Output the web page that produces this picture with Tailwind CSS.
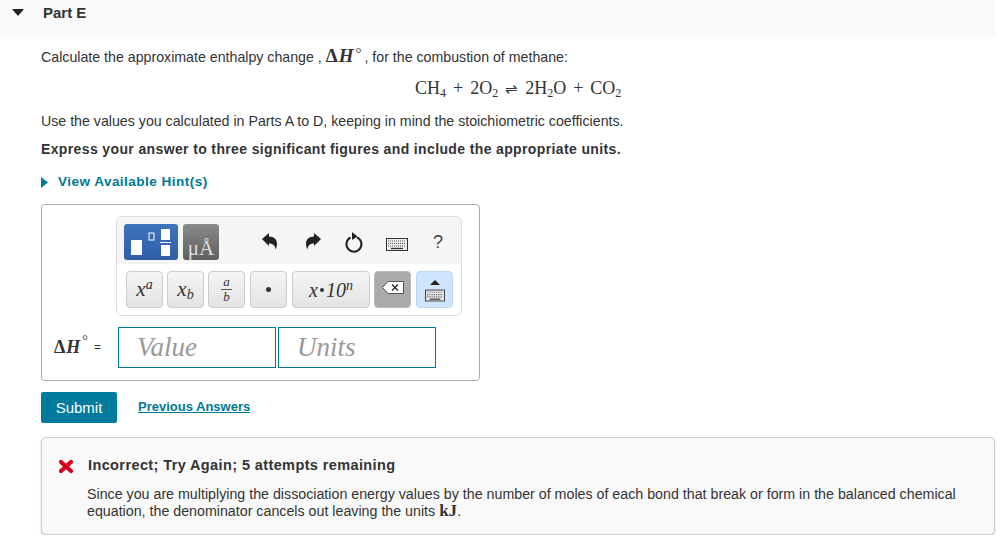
<!DOCTYPE html>
<html lang="en">
<head>
    <meta charset="UTF-8">
    <title>Part E</title>
    <script src="https://cdn.jsdelivr.net/npm/@tailwindcss/browser@4"></script>
</head>
<body class="bg-white font-['Liberation_Sans',Arial,sans-serif] text-[14.2px] text-[#333] overflow-hidden">
<div class="w-[995px]">
    <!-- Part header -->
    <div class="h-[37px] bg-[#f9f9f9] flex items-start pt-[4px]">
        <svg class="ml-[12px] mt-[5px]" width="12" height="7" viewBox="0 0 12 7"><path d="M0 0h12L6 7z" fill="#222"/></svg>
        <div class="ml-[19px] text-[15px] leading-[17px] font-bold text-[#333]">Part E</div>
    </div>

    <div class="pl-[41px]">
        <div class="h-[40px] pt-[9px] leading-[20px] flex items-baseline">
            <span class="whitespace-pre">Calculate the approximate enthalpy change , </span>
            <span class="font-['Liberation_Serif',serif] text-[19px] font-bold whitespace-pre tracking-[1px]">Δ<i>H</i><span class="relative top-[-4px] ml-[1px] text-[15px] font-normal">°</span></span><span class="ml-[2px]">, for the combustion of methane:</span>
        </div>
        <div class="h-[22px] font-['Liberation_Serif',serif] text-[18px] leading-[22px] text-[#333] ml-[374px] flex items-baseline whitespace-pre">CH<sub class="text-[12px]">4</sub><span class="mx-[7px]">+</span>2O<sub class="text-[12px]">2</sub><span class="text-[15px] mx-[7px]">⇌</span>2H<sub class="text-[12px]">2</sub>O<span class="mx-[7px]">+</span>CO<sub class="text-[12px]">2</sub></div>
        <div class="mt-[12px] leading-[20px]">Use the values you calculated in Parts A to D, keeping in mind the stoichiometric coefficients.</div>
        <div class="mt-[8px] leading-[20px] font-bold text-[14px] tracking-[0.37px]">Express your answer to three significant figures and include the appropriate units.</div>
        <div class="mt-[13px] flex items-center h-[20px] text-[#007996] font-bold text-[13.5px] tracking-[0.48px]">
            <svg width="7" height="11" viewBox="0 0 7 11"><path d="M0 0l7 5.5L0 11z" fill="#007996"/></svg>
            <span class="ml-[10px]">View Available Hint(s)</span>
        </div>

        <!-- Answer box -->
        <div class="mt-[12px] w-[439px] h-[177px] border border-[#aaa] rounded-[4px] relative">
            <div class="ml-[74px] mt-[11px] w-[346px] h-[100px] border border-[#ddd] rounded-[6px]">
                <!-- top toolbar -->
                <div class="h-[47px] bg-[#f5f5f5] rounded-t-[6px] flex items-start pt-[7px] pl-[7px]">
                    <div class="w-[54px] h-[36px] rounded-[3px] bg-gradient-to-b from-[#3f74bd] to-[#2f5ea8] flex items-center justify-center">
                        <svg width="44" height="30" viewBox="0 0 44 30">
                            <rect x="2" y="13" width="11" height="15" fill="#fff"/>
                            <rect x="20" y="6" width="5" height="7" fill="none" stroke="#fff"/>
                            <rect x="32" y="2" width="9" height="11" fill="#fff"/>
                            <rect x="31" y="15" width="11" height="1" fill="#fff"/>
                            <rect x="32" y="18" width="9" height="11" fill="#fff"/>
                        </svg>
                    </div>
                    <div class="ml-[5px] w-[36px] h-[36px] rounded-[3px] bg-gradient-to-b from-[#8a8a8a] to-[#5f5f5f] text-[#ddd] font-['Liberation_Serif',serif] text-[21px] flex items-end justify-center leading-[24px]">μÅ</div>
                    <!-- undo -->
                    <svg class="ml-[43px] mt-[9px]" width="16" height="17" viewBox="0 0 16 17"><path d="M0 6L7 0v3.5c5 0 8 3 8 7 0 2.5-.7 4.5-1.5 6-.3-3.5-2-6-6.5-6V13z" fill="#222"/></svg>
                    <!-- redo -->
                    <svg class="ml-[27px] mt-[9px]" width="16" height="17" viewBox="0 0 16 17"><path d="M16 6L9 0v3.5c-5 0-8 3-8 7 0 2.5.7 4.5 1.5 6 .3-3.5 2-6 6.5-6V13z" fill="#222"/></svg>
                    <!-- reset -->
                    <svg class="ml-[23px] mt-[7px]" width="20" height="22" viewBox="0 0 20 22"><path d="M6.500 6.500a7.500 7.500 0 1 0 6.500-.2" fill="none" stroke="#222" stroke-width="2"/><path d="M8 1l5.500 4.500L8 9z" fill="#222"/></svg>
                    <!-- keyboard -->
                    <svg class="ml-[22px] mt-[14px]" width="22" height="13" viewBox="0 0 22 13"><rect x=".5" y=".5" width="21" height="12" fill="#eee" stroke="#333"/><path d="M2 3h18M2 5.500h18M2 8h18" stroke="#555" stroke-width="1.200" stroke-dasharray="1 1"/><path d="M5 10.500h12" stroke="#333" stroke-width="1.300"/></svg>
                    <div class="ml-[25px] mt-[7px] text-[18px] leading-[22px] text-[#444]">?</div>
                </div>
                <!-- template buttons -->
                <div class="flex items-start pt-[7px] pl-[9px] font-['Liberation_Serif',serif] italic text-[#333]">
                    <div class="w-[37px] h-[37px] rounded-[4px] border border-[#ccc] bg-gradient-to-b from-[#f5f5f5] to-[#e3e3e3] flex items-center justify-center text-[21px]"><span>x<sup class="text-[14px]">a</sup></span></div>
                    <div class="ml-[4px] w-[37px] h-[37px] rounded-[4px] border border-[#ccc] bg-gradient-to-b from-[#f5f5f5] to-[#e3e3e3] flex items-center justify-center text-[21px]"><span>x<sub class="text-[14px]">b</sub></span></div>
                    <div class="ml-[4px] w-[37px] h-[37px] rounded-[4px] border border-[#ccc] bg-gradient-to-b from-[#f5f5f5] to-[#e3e3e3] flex flex-col items-center justify-center text-[13px] leading-[12px]"><span>a</span><span class="w-[11px] h-px bg-[#555] my-[1px]"></span><span>b</span></div>
                    <div class="ml-[5px] w-[37px] h-[37px] rounded-[4px] border border-[#ccc] bg-gradient-to-b from-[#f5f5f5] to-[#e3e3e3] flex items-center justify-center"><span class="w-[5px] h-[5px] rounded-full bg-[#333]"></span></div>
                    <div class="ml-[5px] w-[78px] h-[37px] rounded-[4px] border border-[#ccc] bg-gradient-to-b from-[#f5f5f5] to-[#e3e3e3] flex items-center justify-center text-[20px]"><span class="flex items-center">x<span class="w-[4px] h-[4px] rounded-full bg-[#333] mx-[2px]"></span><span>10<sup class="text-[14px]">n</sup></span></span></div>
                    <div class="ml-[4px] w-[37px] h-[37px] rounded-[4px] border border-[#bbb] bg-[#aaa] flex items-start justify-center pt-[9px]">
                        <svg width="22" height="13" viewBox="0 0 22 13"><path d="M6 .5h15.500v12H6L.5 6.500z" fill="#fff" stroke="#333" stroke-width=".8"/><path d="M10 3.500l6 6M16 3.500l-6 6" stroke="#222" stroke-width="1.300"/></svg>
                    </div>
                    <div class="ml-[5px] w-[37px] h-[37px] rounded-[4px] border border-[#bcd8f5] bg-[#cfe4fd] flex flex-col items-center pt-[8px]">
                        <svg width="10" height="5" viewBox="0 0 10 5"><path d="M0 5L5 0l5 5z" fill="#222"/></svg>
                        <svg class="mt-[4px]" width="20" height="13" viewBox="0 0 22 13"><rect x=".5" y=".5" width="21" height="12" fill="#eee" stroke="#333"/><path d="M2 3h18M2 5.500h18M2 8h18" stroke="#555" stroke-width="1.200" stroke-dasharray="1 1"/><path d="M5 10.500h12" stroke="#333" stroke-width="1.300"/></svg>
                    </div>
                </div>
            </div>
            <!-- inputs -->
            <div class="flex items-center mt-[11px] ml-[12px]">
                <div class="w-[64px] font-['Liberation_Serif',serif] text-[18px] font-bold flex items-start tracking-[1px]"><span>Δ<i>H</i></span><span class="text-[14px] font-normal leading-[14px] ml-[1px]">°</span><span class="font-['Liberation_Sans',sans-serif] font-normal text-[12px] leading-[26px] ml-[5px]">=</span></div>
                <div class="w-[158px] h-[41px] border border-[#007996] pl-[18px] font-['Liberation_Serif',serif] italic text-[27px] leading-[39px] text-[#999]">Value</div>
                <div class="ml-[2px] w-[158px] h-[41px] border border-[#007996] pl-[18px] font-['Liberation_Serif',serif] italic text-[27px] leading-[39px] text-[#999]">Units</div>
            </div>
        </div>

        <!-- Submit row -->
        <div class="mt-[11px] flex items-start">
            <div class="w-[76px] h-[31px] rounded-[2px] bg-[#007b9e] text-white text-[15px] leading-[31px] text-center">Submit</div>
            <div class="ml-[21px] mt-[6px] text-[#007996] font-bold text-[13px] underline leading-[17px]">Previous Answers</div>
        </div>

        <!-- Feedback -->
        <div class="mt-[14px] h-[98px] border border-[#ccc] rounded-[5px] bg-[#f9f9f9] shadow-[0_1px_2px_rgba(0,0,0,0.2)]">
            <div class="flex items-center mt-[18px] ml-[16px] h-[20px]">
                <svg width="16" height="15" viewBox="0 0 16 15"><path d="M3 3l10 9M13 3L3 12" stroke="#d9001f" stroke-width="4.2" stroke-linecap="round"/></svg>
                <div class="ml-[14px] font-bold text-[14.5px] tracking-[0.39px] text-[#333]">Incorrect; Try Again; 5 attempts remaining</div>
            </div>
            <div class="ml-[45px] mt-[10px] w-[890px] text-[14.24px] leading-[17px]">Since you are multiplying the dissociation energy values by the number of moles of each bond that break or form in the balanced chemical equation, the denominator cancels out leaving the units <span class="font-['Liberation_Serif',serif] font-bold text-[17px] leading-[0]">kJ</span>.</div>
        </div>
    </div>
</div>
</body>
</html>
